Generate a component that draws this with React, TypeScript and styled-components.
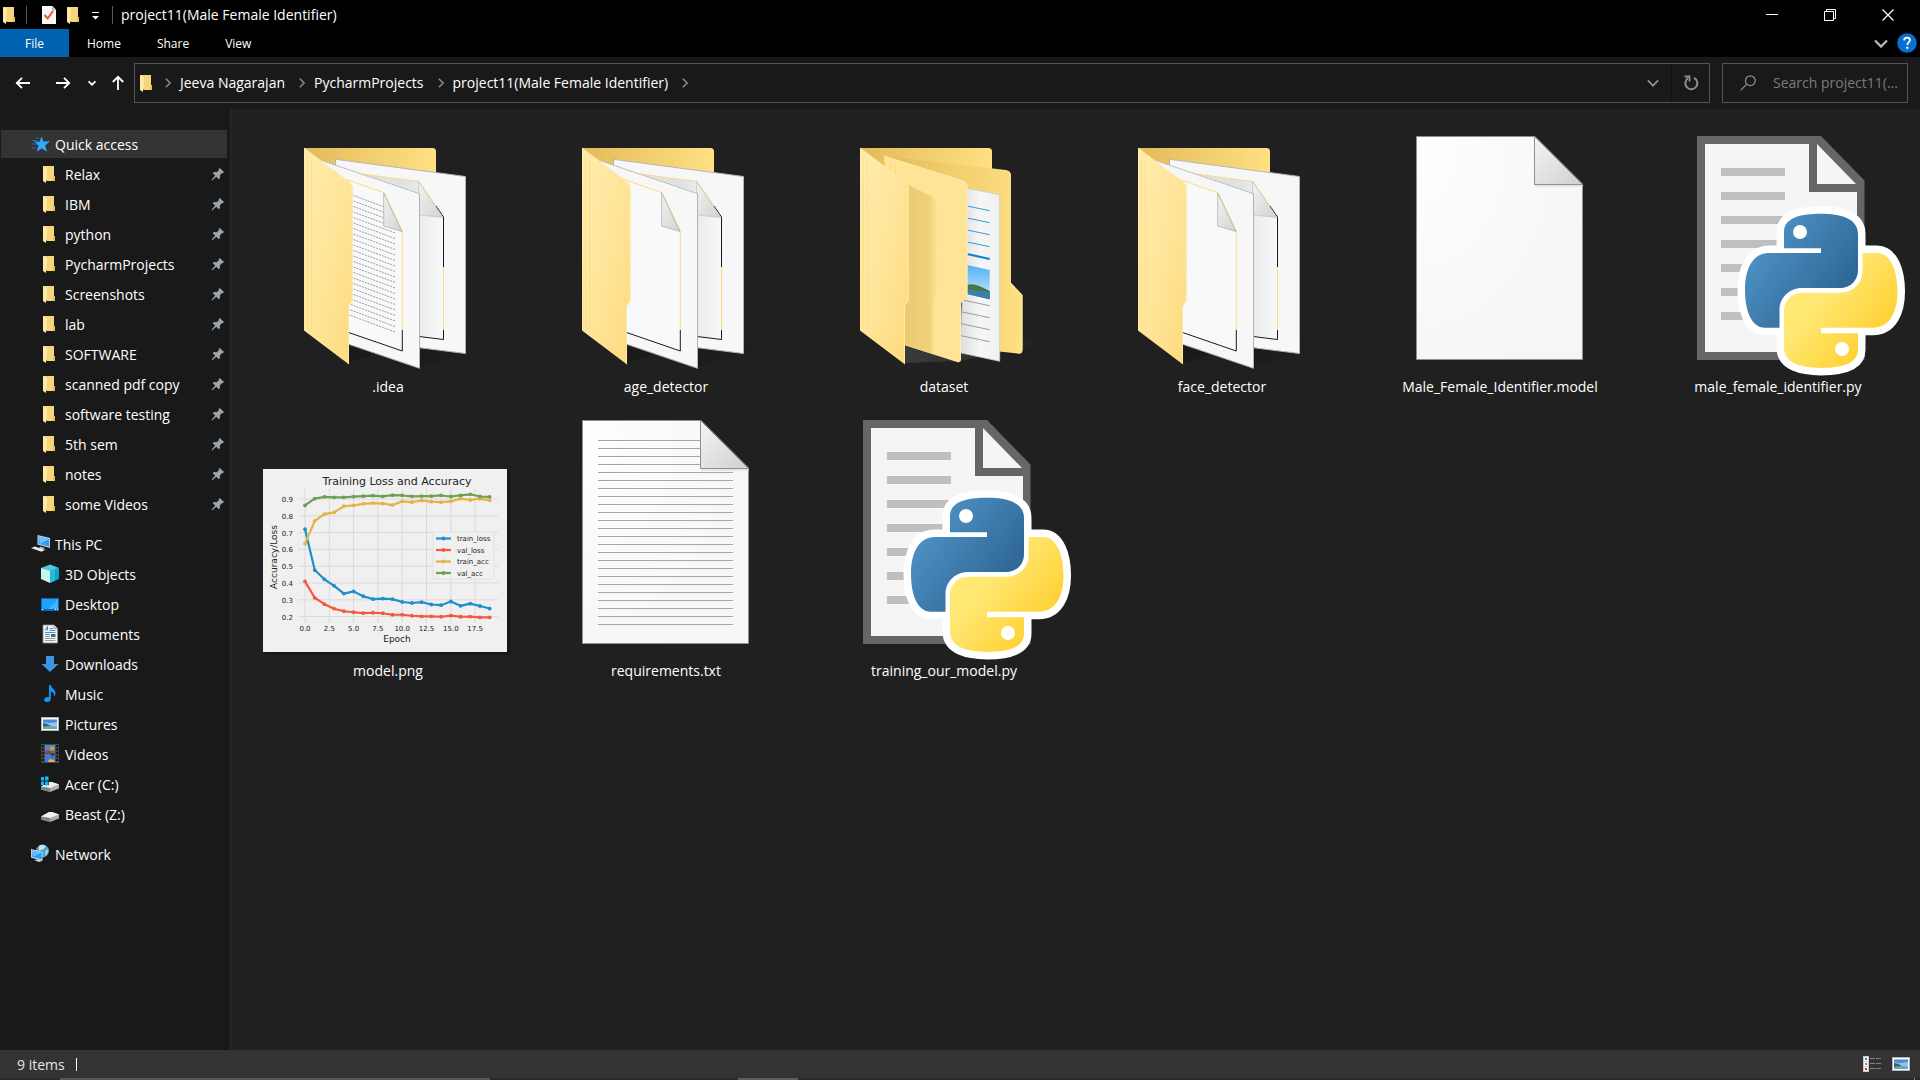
import React from "react";
import styled, { createGlobalStyle } from "styled-components";

const GlobalStyle = createGlobalStyle`
  *, *::before, *::after { box-sizing: border-box; }
  body {
    margin: 0;
    background: #202020;
    color: #fff;
    font-family: "Open Sans", "Noto Sans", sans-serif;
    font-size: 14px;
    line-height: 20px;
  }
  button, input {
    font: inherit;
    color: inherit;
    margin: 0;
    padding: 0;
    border: 0;
    background: transparent;
  }
  ul, ol { list-style: none; margin: 0; padding: 0; }
  a { color: inherit; text-decoration: none; }
  svg { display: block; flex: none; }
`;

const Window = styled.div`
  display: flex;
  flex-direction: column;
  min-height: 100vh;
`;

const TitleBar = styled.header`
  display: flex;
  align-items: center;
  height: 29px;
  padding: 0 3px;
  background: #000;
`;

const QuickTools = styled.div`
  display: flex;
  align-items: center;
  height: 29px;
  gap: 11px;
`;

const Rule = styled.span<{ $tint: string; $size: number; $after?: number }>`
  width: 1px;
  height: ${(p) => p.$size}px;
  margin-right: ${(p) => p.$after ?? 0}px;
  background: ${(p) => p.$tint};
`;

const ToolButton = styled.button<{ $after?: number }>`
  display: flex;
  align-items: center;
  justify-content: center;
  margin-right: ${(p) => p.$after ?? 0}px;
`;

const WindowTitle = styled.h1`
  flex: 1;
  margin: 0 0 0 8px;
  font-size: 14px;
  font-weight: 400;
`;

const WindowButton = styled.button`
  display: flex;
  align-items: center;
  justify-content: center;
  width: 58px;
  height: 29px;
`;

const Ribbon = styled.nav`
  display: flex;
  align-items: center;
  height: 28px;
  padding-right: 3px;
  background: #000;
  font-size: 12px;
`;

const RibbonTab = styled.button<{ $primary?: boolean }>`
  height: 28px;
  padding: 2px ${(p) => (p.$primary ? 25 : 18)}px 0;
  background: ${(p) => (p.$primary ? "#0063b1" : "transparent")};
`;

const Spacer = styled.div`
  flex: 1;
`;

const RibbonEnd = styled.div`
  display: flex;
  align-items: center;
  gap: 9px;
`;

const NavBar = styled.div`
  display: flex;
  align-items: center;
  height: 52px;
  padding: 0 12px 0 15px;
  background: #191919;
`;

const NavButtons = styled.div`
  display: flex;
  align-items: center;
  margin-right: 8px;
`;

const AddressBar = styled.div`
  display: flex;
  flex: 1;
  align-items: center;
  height: 40px;
  padding-left: 5px;
  border: 1px solid #535353;
`;

const Crumbs = styled.ol`
  display: flex;
  flex: 1;
  align-items: center;
  margin-left: 13px;
`;

const Crumb = styled.li`
  display: flex;
  align-items: center;
  gap: 9px;
  margin-right: 14px;
`;

const AddressButton = styled.button<{ $divided?: boolean }>`
  display: flex;
  align-items: center;
  justify-content: center;
  width: 38px;
  height: 38px;
  border-left: 1px solid ${(p) => (p.$divided ? "#111" : "transparent")};
`;

const SearchBox = styled.label`
  display: flex;
  align-items: center;
  gap: 17px;
  width: 186px;
  height: 40px;
  margin-left: 12px;
  padding: 0 4px 0 17px;
  border: 1px solid #535353;
`;

const SearchInput = styled.input`
  flex: 1;
  min-width: 0;
  outline: none;
  &::placeholder { color: #7c7c7c; opacity: 1; }
`;

const Body = styled.div`
  display: flex;
  flex: 1;
`;

const Sidebar = styled.nav`
  display: flex;
  flex-direction: column;
  gap: 12px;
  width: 231px;
  padding: 21px 3px 0 1px;
  border-right: 1px solid #2b2b2b;
  background: #191919;
`;

const TreeList = styled.ul`
  display: flex;
  flex-direction: column;
  gap: 2px;
`;

const TreeLink = styled.a<{ $child?: boolean; $active?: boolean }>`
  display: flex;
  align-items: center;
  gap: 4px;
  height: 28px;
  padding: 0 2px 0 ${(p) => (p.$child ? 40 : 30)}px;
  background: ${(p) => (p.$active ? "#333" : "transparent")};
`;

const TreeLabel = styled.span`
  flex: 1;
  padding-top: 2px;
  white-space: nowrap;
`;

const FileGrid = styled.main`
  display: grid;
  flex: 1;
  grid-template-columns: repeat(auto-fill, 278px);
  align-content: start;
  gap: 7px 0;
  padding: 11px 0 0 18px;
`;

const FileItem = styled.button`
  display: flex;
  flex-direction: column;
  align-items: center;
  gap: 1px;
`;

const StatusBar = styled.footer`
  display: flex;
  align-items: center;
  gap: 11px;
  height: 28px;
  padding: 0 8px 0 17px;
  background: #333;
  color: #e6e6e6;
`;

const ItemCount = styled.span`
  padding-top: 2px;
`;

const TaskStrip = styled.div`
  display: flex;
  height: 2px;
  padding: 0 5px 0 60px;
  background: #2b2829;
`;

const StripPart = styled.span<{ $width: number; $gap: number; $tint: string }>`
  width: ${(p) => p.$width}px;
  margin-right: ${(p) => p.$gap}px;
  background: ${(p) => p.$tint};
`;

/* ---------- small icons ---------- */

const SmallFolder = () => (
  <svg width="20" height="20" viewBox="0 0 20 20">
    <path d="M2 2h11v10l1 1v4H6L2 15z" fill="#f6d67a" />
    <path d="M12 12h2v5h-2z" fill="#e9c05a" />
    <path d="M2 2l4 2.2v9.3l-1 1V19l-3-2z" fill="#ffe9a8" />
  </svg>
);

const BarFolder = () => (
  <svg width="12" height="18" viewBox="2 1 12 18">
    <path d="M2 2h11v10l1 1v4H6L2 15z" fill="#f6d67a" />
    <path d="M12 12h2v5h-2z" fill="#e9c05a" />
    <path d="M2 2l4 2.2v9.3l-1 1V19l-3-2z" fill="#ffe9a8" />
  </svg>
);

const CheckedPage = () => (
  <svg width="14" height="18" viewBox="0 0 14 18">
    <path d="M0 0h10.500l3.500 4v14H0z" fill="#f7f7f7" />
    <path d="M10.500 0v4H14" fill="#ccc" stroke="#999" strokeWidth=".6" />
    <path d="M2.500 9l3.200 3.500L11 5" fill="none" stroke="#e8571f" strokeWidth="2" />
  </svg>
);

const Chevron = ({ dir, size, tint, weight = 2 }: { dir: "down" | "right"; size: number; tint: string; weight?: number }) => (
  <svg width={dir === "down" ? size : size / 2 + 1} height={dir === "down" ? size / 2 + 2 : size} viewBox={dir === "down" ? "0 0 14 9" : "0 0 8 14"}>
    <path d={dir === "down" ? "M1 1.500l6 6 6-6" : "M1 1l6 6-6 6"} fill="none" stroke={tint} strokeWidth={weight} />
  </svg>
);

const Arrow = ({ turn = 0 }: { turn?: number }) => (
  <svg width="16" height="16" viewBox="0 0 16 16">
    <path d="M15 8H2M7 2.800L1.800 8 7 13.200" fill="none" stroke="#fff" strokeWidth="1.800" transform={`rotate(${turn} 8 8)`} />
  </svg>
);

const Pin = () => (
  <svg width="14" height="14" viewBox="0 0 14 14">
    <path d="M8.800 1l4.200 4-1.200 1.200-.7-.2-2.300 2.400.2 2.700-1.200 1.100L5.300 9.700 1.400 13.200l-.8.100.2-.9L4.200 8.600 1.700 6.200l1.200-1.100 2.800.2 2.300-2.400-.3-.8z" fill="#9aa5ad" />
  </svg>
);

const Star = () => (
  <svg width="20" height="20" viewBox="0 0 20 20">
    <path d="M10.500 2.500l2 4.900 6.500-.2-4.800 4.300 1.800 6.200-5.200-3.300-5 3 1.600-5.700L3.500 7.600l5 .2z" fill="#2fa9f5" />
    <path d="M1 6.500h5M0 10h6M1 14h4M5 4h3" stroke="#1a6fae" strokeWidth="1" />
  </svg>
);

const ThisPc = () => (
  <svg width="20" height="20" viewBox="0 0 20 20">
    <path d="M6.500 1l12.500 3v10L6.500 10.500z" fill="#cfd6dc" />
    <path d="M7.500 2.300l10.700 2.600v7.800L7.500 9.700z" fill="#2f9df0" />
    <path d="M7.500 2.300l10.700 2.600L9 10z" fill="#6cc0fb" />
    <path d="M9 12.500l5 1.500-2 1.500 4 .5-5 .5-3-2z" fill="#b7bdc2" />
    <path d="M0 14l4-1.500 9.500 3.500-3 1.800z" fill="#e8eaec" />
  </svg>
);

const Cube = () => (
  <svg width="20" height="20" viewBox="0 0 20 20">
    <path d="M0 4l9-3.500L18 4l-9 4z" fill="#52c9d8" />
    <path d="M0 4l9 3v12l-9-4z" fill="#c8f3f3" />
    <path d="M18 4L9 7v12l9-4z" fill="#0aa5cf" />
    <path d="M9 7l5-1.500v11L9 19z" fill="#25bcd9" />
  </svg>
);

const DesktopIcon = () => (
  <svg width="20" height="20" viewBox="0 0 20 20">
    <rect x="0" y="4" width="18" height="13" fill="#0a6cb8" />
    <rect x="1" y="5" width="16" height="10" fill="#1ba1fb" />
    <path d="M17 5v10H7z" fill="#45b4ff" />
    <path d="M1 15.500h1M14 15.500h1M16 15.500h1" stroke="#fff" />
  </svg>
);

const DocumentIcon = () => (
  <svg width="20" height="20" viewBox="0 0 20 20">
    <path d="M2 1h11l3.500 3.500V19H2z" fill="#f4f4f4" stroke="#8e8e8e" strokeWidth=".8" />
    <path d="M13 1v3.500h3.500" fill="#ddd" stroke="#8e8e8e" strokeWidth=".8" />
    <path d="M4 6.500L6.500 2.500V6.500" fill="none" stroke="#2b86c8" />
    <path d="M8.500 4.500H12M8.500 6.500h6M4 8.500h10.500M4 10.500h5" stroke="#3d94d3" />
    <path d="M4 12.500h5M4 14.500h10.500M4 16.500h10.500" stroke="#9a9a9a" />
    <rect x="10" y="10" width="4.500" height="3" fill="#36708c" />
  </svg>
);

const DownloadIcon = () => (
  <svg width="20" height="20" viewBox="0 0 20 20">
    <path d="M5 2h8v8h4.500L9 18 .5 10H5z" fill="#3b94e6" />
  </svg>
);

const MusicIcon = () => (
  <svg width="20" height="20" viewBox="0 0 20 20">
    <path d="M8 1h1.800c.3 3.500 4.700 4.300 4.700 8 0 1.800-.8 2.800-1.700 3.600.8-2.800-.7-4.600-3-5v7.200C9.800 17 8 18 6 18c-1.700 0-2.800-.8-2.800-2.200 0-1.800 2-3 4.800-2.600z" fill="#0f9bf5" />
  </svg>
);

const PictureIcon = () => (
  <svg width="20" height="20" viewBox="0 0 20 20">
    <rect x="0" y="3" width="18" height="14" fill="#b4b4b4" />
    <rect x="1" y="4" width="16" height="12" fill="#fff" />
    <rect x="2" y="5" width="14" height="10" fill="#8fc5ee" />
    <path d="M2 6h14v2l-8 1-6-1z" fill="#4b88d6" />
    <path d="M2 9q4 0 7 2.500t7 1.500v2H2z" fill="#37694f" />
    <path d="M2 13q7-2 14 0v2H2z" fill="#6ba6b8" />
  </svg>
);

const VideoIcon = () => (
  <svg width="20" height="20" viewBox="0 0 20 20">
    <rect x="0" y="0" width="18" height="19" fill="#484848" />
    <path d="M1.800 1v17M16.200 1v17" stroke="#111" strokeWidth="2" strokeDasharray="2 1.500" />
    <rect x="4" y="1" width="10" height="8" fill="#4a86e0" />
    <rect x="4" y="10" width="10" height="8" fill="#3f7bdc" />
    <path d="M4 7l3-1 2 1 3-.5V9H4z" fill="#b33a2c" />
    <circle cx="11" cy="4.500" r="2.200" fill="#c9a42a" />
    <path d="M10 7h4v2h-4z" fill="#3e8a3c" />
    <path d="M7 17l2-2 3 1 2 1v1H7z" fill="#e0b93a" />
    <path d="M9 10h5l-2 2.500z" fill="#1d3c74" />
    <path d="M10.500 12h1.500v1.500h-1.500z" fill="#c0392b" />
  </svg>
);

const DriveIcon = ({ system }: { system?: boolean }) => (
  <svg width="20" height="20" viewBox="0 0 20 20">
    <path d="M0 12.500L8 8h3l7 2.500v4L9 18l-9-2.500z" fill="#a9adb1" />
    <path d="M0 12.500L8 8h3l7 2.500-9 3.500z" fill="#eceef0" />
    <path d="M0 12.500l9 1.800V18l-9-2.500z" fill="#7c8083" />
    <path d="M2 15h2" stroke="#36c65b" />
    {system && (
      <g>
        <rect x="0" y="2" width="8" height="9" fill="#191919" />
        <path d="M0 3h3v3.500H0zM4 2.500h3.500v4H4zM0 7.500h3V11H0zM4 7.500h3.500v4H4z" fill="#0fb9f3" />
      </g>
    )}
  </svg>
);

const NetworkIcon = () => (
  <svg width="20" height="20" viewBox="0 0 20 20">
    <circle cx="11.500" cy="7" r="6.500" fill="#4fa3c8" />
    <path d="M8 2q4-2.500 7 .5l-3 3-4 1z" fill="#c4e6ef" />
    <path d="M14 7l3-2v4l-3 3z" fill="#9ad0e2" />
    <path d="M0 5l11.500 3v9L0 13.500z" fill="#d4e4ef" />
    <path d="M.8 6.200l10 2.600v6.800L.8 12.800z" fill="#2b9df2" />
    <path d="M.8 6.200l10 2.600-9 4z" fill="#67bdfa" />
    <path d="M3 16l4-.5 4 1.500-3 1z" fill="#d8dcdf" />
  </svg>
);

/* ---------- large icons ---------- */

const FLAP = "M44 28L90 62.500Q92.700 64.500 92.700 68V180L89 186.500V244.500L44 210.500Z";

const FrontFlap = ({ id }: { id: string }) => (
  <>
    <linearGradient id={`${id}-flap`} x1="0" y1="0" x2="1" y2="1">
      <stop offset="0" stopColor="#ffecad" />
      <stop offset=".5" stopColor="#ffe59a" />
      <stop offset="1" stopColor="#fdd97b" />
    </linearGradient>
    <path d={FLAP} fill={`url(#${id}-flap)`} />
    <path d="M47.500 37V209M51.500 40V210" stroke="#fddf85" />
    <path d="M44 28L90 62.500Q92.200 64.500 92.200 68V180L88.500 186.500V244" fill="none" stroke="#ffeeb8" strokeWidth=".8" />
  </>
);

const BackPanel = ({ id }: { id: string }) => (
  <>
    <linearGradient id={`${id}-back`}>
      <stop offset="0" stopColor="#e3bb58" />
      <stop offset="1" stopColor="#ffe083" />
    </linearGradient>
    <path d="M44 28H172.500Q176 28 176 31.500V90H90Z" fill={`url(#${id}-back)`} />
  </>
);

const FloorShadow = ({ id }: { id: string }) => (
  <>
    <linearGradient id={`${id}-floor`}>
      <stop offset="0" stopColor="#000" stopOpacity=".3" />
      <stop offset="1" stopColor="#000" stopOpacity="0" />
    </linearGradient>
    <path d="M89 226L200 218L228 224L160 247Z" fill={`url(#${id}-floor)`} />
    <path d="M89 228L116 234L89 243Z" fill="#1a1a1a" />
  </>
);

const PaperFolder = ({ id, lined }: { id: string; lined?: boolean }) => (
  <svg width="256" height="256" viewBox="0 0 256 256">
    <defs>
      <linearGradient id={`${id}-curl`} x1="0" y1="0" x2="1" y2="1">
        <stop offset="0" stopColor="#f3f3f3" />
        <stop offset="1" stopColor="#d2d2d2" />
      </linearGradient>
      <linearGradient id={`${id}-inner`}>
        <stop offset=".5" stopColor="#dfe2e4" />
        <stop offset="1" stopColor="#f7f9fa" />
      </linearGradient>
      <clipPath id={`${id}-page`}>
        <path d="M80 57L124 72.700L136 98V231L80 212Z" />
      </clipPath>
    </defs>
    <FloorShadow id={id} />
    <BackPanel id={id} />
    <path d="M75.500 39L205.500 56.500V233.500L159 227.500V73L75.500 45Z" fill="#f7f7f8" />
    <path d="M75.500 45V39.300L205.500 56.500V233.500L159 227.700" fill="none" stroke="#b4b4b4" />
    <path d="M102 54L159 61.500L183.500 97V219.500L159 216.500V73Z" fill={`url(#${id}-inner)`} />
    <path d="M102 54L159 61.500L176 86M183.500 147V210" fill="none" stroke="#fbdc7e" />
    <path d="M176 86L183.500 97V147M183.500 210V219.500L159 216.500" fill="none" stroke="#1a1a1a" />
    <path d="M158.500 61.500L183 97.500L159 95Z" fill={`url(#${id}-curl)`} stroke="#bbb" strokeWidth=".6" />
    <path d="M58 39L159.500 73.700V248.300L88 224Z" fill="#f7f7f8" />
    <path d="M58 39.300L159.500 73.700" fill="none" stroke="#aaa" strokeDasharray="2 1" />
    <path d="M159.500 73.700V248.300L88 224" fill="none" stroke="#b4b4b4" />
    <path d="M80 57.300L124 72.700L142.300 111V231L88 212.500Z" fill="#f7f9fb" />
    {lined && (
      <g clipPath={`url(#${id}-page)`} stroke="#9c9c9c" strokeDasharray="2 1">
        {Array.from({ length: 23 }, (_, i) => (
          <line key={i} x1="88" y1={73.5 + i * 5.5} x2="136" y2={91.3 + i * 5.5} />
        ))}
      </g>
    )}
    <path d="M80 57.300L124 72.700L142.300 111V210" fill="none" stroke="#fbdc7e" />
    <path d="M142.300 210V231L88 212.300" fill="none" stroke="#1a1a1a" />
    <path d="M123.700 73L142 111.500L123.700 106Z" fill={`url(#${id}-curl)`} stroke="#aaa" strokeWidth=".7" />
    <FrontFlap id={id} />
  </svg>
);

const NestedFolder = ({ id }: { id: string }) => (
  <svg width="256" height="256" viewBox="0 0 256 256">
    <defs>
      <linearGradient id={`${id}-shade`}>
        <stop offset="0" stopColor="#e4c263" stopOpacity=".8" />
        <stop offset=".8" stopColor="#e4c263" stopOpacity=".55" />
        <stop offset="1" stopColor="#e4c263" stopOpacity="0" />
      </linearGradient>
      <linearGradient id={`${id}-sheet`}>
        <stop offset="0" stopColor="#dcdcdc" />
        <stop offset=".5" stopColor="#f6f6f6" />
        <stop offset="1" stopColor="#f0f0f0" />
      </linearGradient>
      <linearGradient id={`${id}-sky`} x1="0" y1="0" x2="0" y2="1">
        <stop offset="0" stopColor="#4fb0f6" />
        <stop offset="1" stopColor="#cfe9fb" />
      </linearGradient>
      <linearGradient id={`${id}-floor`}>
        <stop offset="0" stopColor="#3a3a3a" />
        <stop offset=".7" stopColor="#2b2b2b" />
        <stop offset="1" stopColor="#202020" />
      </linearGradient>
    </defs>
    <path d="M89 226L200 218L226 224L145 241L89 243Z" fill={`url(#${id}-floor)`} />
    <BackPanel id={id} />
    <path d="M68 36L190 50Q195 51 195 55V162.700L206.500 175V230Q206.500 234 203 233.700L150 228V80Z" fill={`url(#${id}-back)`} />
    <path d="M194.500 163L206 175.200V230" fill="none" stroke="#ffeeb4" strokeWidth=".8" />
    <path d="M151 68.300L183.700 74.700V241.300L144 232.700Z" fill={`url(#${id}-sheet)`} stroke="#c9c9c9" strokeWidth=".8" />
    {[86, 98, 110, 122].map((y) => (
      <line key={y} x1="151" y1={y} x2="173.700" y2={y + 4.7} stroke="#2e9bdc" />
    ))}
    <line x1="151" y1="134" x2="173.700" y2="139" stroke="#0a84d0" strokeWidth="2.200" />
    <path d="M151 145L173.700 150V179.300L151 174Z" fill={`url(#${id}-sky)`} />
    <path d="M151 165Q156 163 163 166Q168 168 173.700 171V179.300L151 174Z" fill="#4c7440" />
    <path d="M151 169L173.700 172V179.300L151 174Z" fill="#3a80ad" />
    {[181, 193, 205, 217].map((y) => (
      <line key={y} x1="144" y1={y - 1.5} x2="173.700" y2={y + 4.7} stroke="#9d9d9d" />
    ))}
    <path d="M68 36L147.500 61Q151.500 62.500 151.500 67V176.700L145 183V239Q145 243 141 242L80 222.500Z" fill="#ffe396" />
    <path d="M68 36L147.500 61Q151 62.500 151 67V176.700L144.500 183V240" fill="none" stroke="#ffefb9" strokeWidth=".8" />
    <path d="M74.500 44V80M79.500 46V80" stroke="#fbdb7c" />
    <path d="M80 58L118 78Q121 80 121 84V172L117 182V234L84 223Z" fill={`url(#${id}-shade)`} />
    <FrontFlap id={id} />
  </svg>
);

const PlainDoc = ({ id, lined }: { id: string; lined?: boolean }) => (
  <svg width="256" height="256" viewBox="0 0 256 256">
    <defs>
      <radialGradient id={`${id}-sheet`} cx=".05" cy=".1" r="1">
        <stop offset="0" stopColor="#fdfefe" />
        <stop offset="1" stopColor="#f4f6f8" />
      </radialGradient>
      <linearGradient id={`${id}-curl`} x1="0" y1="0" x2="1" y2="1">
        <stop offset="0" stopColor="#f4f4f4" />
        <stop offset="1" stopColor="#d0d0d0" />
      </linearGradient>
    </defs>
    <path d="M44.500 16.500H163L210.500 64V239.500H44.500Z" fill={`url(#${id}-sheet)`} stroke="#8f8f8f" />
    {lined &&
      Array.from({ length: 24 }, (_, i) => (
        <line key={i} x1="60" x2={i < 4 ? 163 : 195} y1={36.5 + i * 8} y2={36.5 + i * 8} stroke="#a6a6a6" />
      ))}
    <path d="M163 66H210.500" stroke="#e4e6e7" strokeWidth="2" />
    <path d="M162.500 16.500V64.500H210.500Z" fill={`url(#${id}-curl)`} stroke="#8f8f8f" />
  </svg>
);

const SNAKE =
  "M134 128.300V112C134 97 152 93.700 171 93.700C190 93.700 208 98 208 114V150C208 160 201 168 190 168H152C139 168 129.500 178 129.500 190V207.700H115C101 207.700 95 190 95 170C95 150 102 133 119 133H171V128.300Z";

const GOLD_SNAKE =
  "M208 213.300V229.600C208 244.600 190 247.900 171 247.900C152 247.900 134 243.600 134 227.600V191.600C134 181.600 141 172.800 152 172.800H190C203 172.800 212.500 163.600 212.500 151.600V133H227C241 133 247.500 151.600 247.500 171.600C247.500 191.600 240 207.700 223 207.700H171V213.300Z";

const PythonDoc = ({ id }: { id: string }) => (
  <svg width="256" height="256" viewBox="0 0 256 256">
    <defs>
      <linearGradient id={`${id}-blue`} x1=".1" y1=".1" x2=".85" y2=".65">
        <stop offset="0" stopColor="#5296c9" />
        <stop offset="1" stopColor="#306998" />
      </linearGradient>
      <linearGradient id={`${id}-gold`} x1=".9" y1=".8" x2=".3" y2=".3">
        <stop offset=".1" stopColor="#ffd031" />
        <stop offset=".9" stopColor="#ffe873" />
      </linearGradient>
    </defs>
    <path d="M47 16H171L214.500 60.500V240H47Z" fill="#666" />
    <path d="M55 24H159V72H207V232H55Z" fill="#f5f5f5" />
    <path d="M167 24V64H206Z" fill="#f5f5f5" />
    {Array.from({ length: 7 }, (_, i) => (
      <rect key={i} x="71" y={48 + i * 24} width="64" height="8" fill="#bfbfbf" />
    ))}
    <g fill="#fff" stroke="#fff" strokeWidth="15" strokeLinejoin="round">
      <path d={SNAKE} />
      <path d={GOLD_SNAKE} />
    </g>
    <path d={SNAKE} fill={`url(#${id}-blue)`} />
    <path d={GOLD_SNAKE} fill={`url(#${id}-gold)`} />
    <circle cx="150" cy="112" r="7" fill="#fff" />
    <circle cx="192" cy="229" r="7" fill="#fff" />
  </svg>
);

const px = (epoch: number) => 45 + epoch * 9.72;
const py = (value: number) => 95 + (0.9 - value) * 168;

const SERIES = [
  { name: "train_loss", tint: "#1f8fc9", values: [0.72, 0.477, 0.422, 0.383, 0.337, 0.35, 0.321, 0.304, 0.307, 0.304, 0.287, 0.281, 0.286, 0.272, 0.268, 0.29, 0.264, 0.277, 0.263, 0.248] },
  { name: "val_loss", tint: "#f4583f", values: [0.41, 0.312, 0.274, 0.247, 0.232, 0.226, 0.221, 0.223, 0.22, 0.211, 0.211, 0.205, 0.201, 0.201, 0.199, 0.206, 0.199, 0.2, 0.195, 0.195] },
  { name: "train_acc", tint: "#e3b348", values: [0.633, 0.77, 0.81, 0.82, 0.857, 0.862, 0.871, 0.876, 0.873, 0.864, 0.886, 0.881, 0.891, 0.884, 0.881, 0.886, 0.902, 0.894, 0.902, 0.892] },
  { name: "val_acc", tint: "#6f9f52", values: [0.862, 0.902, 0.913, 0.91, 0.91, 0.914, 0.917, 0.92, 0.916, 0.923, 0.921, 0.916, 0.917, 0.917, 0.921, 0.915, 0.922, 0.928, 0.915, 0.913] },
];

const ChartText = styled.text`
  font-family: "DejaVu Sans", sans-serif;
  fill: #222;
`;

const ChartThumb = () => (
  <svg width="256" height="256" viewBox="0 0 256 256">
    <rect x="5" y="67" width="245" height="184" fill="#181818" />
    <rect x="3" y="65" width="244" height="183" fill="#f0f0f0" />
    <g stroke="#dadada">
      {[0, 2.5, 5, 7.5, 10, 12.5, 15, 17.5].map((t) => (
        <line key={t} x1={px(t)} x2={px(t)} y1="85" y2="219" />
      ))}
      {[0.2, 0.3, 0.4, 0.5, 0.6, 0.7, 0.8, 0.9].map((t) => (
        <line key={t} x1="38" x2="238" y1={py(t)} y2={py(t)} />
      ))}
    </g>
    {SERIES.map((s) => (
      <g key={s.name} stroke={s.tint} fill={s.tint}>
        <polyline points={s.values.map((v, i) => `${px(i)},${py(v)}`).join(" ")} fill="none" strokeWidth="2.200" strokeLinejoin="round" />
        {s.values.map((v, i) => (
          <circle key={i} cx={px(i)} cy={py(v)} r="1.900" stroke="none" />
        ))}
      </g>
    ))}
    <rect x="173" y="128" width="61" height="47" rx="1" fill="#f0f0f0" stroke="#e2e2e2" />
    {SERIES.map((s, i) => (
      <g key={s.name}>
        <line x1="176" x2="191" y1={134.5 + i * 11.5} y2={134.5 + i * 11.5} stroke={s.tint} strokeWidth="2.200" />
        <circle cx="183.500" cy={134.5 + i * 11.5} r="1.900" fill={s.tint} />
        <ChartText x="197" y={137 + i * 11.5} fontSize="7">{s.name}</ChartText>
      </g>
    ))}
    {[0, 2.5, 5, 7.5, 10, 12.5, 15, 17.5].map((t) => (
      <ChartText key={t} x={px(t)} y="227" fontSize="7" textAnchor="middle">{t.toFixed(1)}</ChartText>
    ))}
    {[0.2, 0.3, 0.4, 0.5, 0.6, 0.7, 0.8, 0.9].map((t) => (
      <ChartText key={t} x="33" y={py(t) + 3} fontSize="7" textAnchor="end">{t.toFixed(1)}</ChartText>
    ))}
    <ChartText x="137" y="81" fontSize="11" textAnchor="middle">Training Loss and Accuracy</ChartText>
    <ChartText x="137" y="238" fontSize="9" textAnchor="middle">Epoch</ChartText>
    <ChartText fontSize="9" textAnchor="middle" transform="translate(17 153) rotate(-90)">Accuracy/Loss</ChartText>
  </svg>
);

/* ---------- data ---------- */

const PINNED = ["Relax", "IBM", "python", "PycharmProjects", "Screenshots", "lab", "SOFTWARE", "scanned pdf copy", "software testing", "5th sem", "notes", "some Videos"];

const PLACES = [
  { name: "3D Objects", icon: <Cube /> },
  { name: "Desktop", icon: <DesktopIcon /> },
  { name: "Documents", icon: <DocumentIcon /> },
  { name: "Downloads", icon: <DownloadIcon /> },
  { name: "Music", icon: <MusicIcon /> },
  { name: "Pictures", icon: <PictureIcon /> },
  { name: "Videos", icon: <VideoIcon /> },
  { name: "Acer (C:)", icon: <DriveIcon system /> },
  { name: "Beast (Z:)", icon: <DriveIcon /> },
];

const CRUMBS = ["Jeeva Nagarajan", "PycharmProjects", "project11(Male Female Identifier)"];

const FILES = [
  { name: ".idea", icon: <PaperFolder id="idea" lined /> },
  { name: "age_detector", icon: <PaperFolder id="age" /> },
  { name: "dataset", icon: <NestedFolder id="data" /> },
  { name: "face_detector", icon: <PaperFolder id="face" /> },
  { name: "Male_Female_Identifier.model", icon: <PlainDoc id="model" /> },
  { name: "male_female_identifier.py", icon: <PythonDoc id="mfi" /> },
  { name: "model.png", icon: <ChartThumb /> },
  { name: "requirements.txt", icon: <PlainDoc id="req" lined /> },
  { name: "training_our_model.py", icon: <PythonDoc id="train" /> },
];

const TreeRow = ({ name, icon, child, active, pinned }: { name: string; icon: React.ReactNode; child?: boolean; active?: boolean; pinned?: boolean }) => (
  <li>
    <TreeLink href="#" $child={child} $active={active}>
      {icon}
      <TreeLabel>{name}</TreeLabel>
      {pinned && <Pin />}
    </TreeLink>
  </li>
);

const CrumbChevron = () => <Chevron dir="right" size={10} tint="#8a8a8a" weight={2.2} />;

export default function App() {
  return (
    <>
      <GlobalStyle />
      <Window>
        <TitleBar>
          <QuickTools>
            <BarFolder />
            <Rule $tint="#5a5a5a" $size={18} $after={4} />
            <ToolButton aria-label="Properties">
              <CheckedPage />
            </ToolButton>
            <ToolButton aria-label="New folder">
              <BarFolder />
            </ToolButton>
            <ToolButton aria-label="Customize toolbar">
              <svg width="11" height="10" viewBox="0 0 11 10">
                <path d="M2 2.500h7" stroke="#fff" />
                <path d="M2 6h7L5.500 9.500z" fill="#fff" />
              </svg>
            </ToolButton>
            <Rule $tint="#5a5a5a" $size={18} />
          </QuickTools>
          <WindowTitle>project11(Male Female Identifier)</WindowTitle>
          <WindowButton aria-label="Minimize">
            <svg width="12" height="12"><path d="M0 5.500h12" stroke="#fff" /></svg>
          </WindowButton>
          <WindowButton aria-label="Restore">
            <svg width="12" height="12"><path d="M.5 2.500h9v9h-9zM2.500 2.500v-2h9v9h-2" fill="none" stroke="#fff" /></svg>
          </WindowButton>
          <WindowButton aria-label="Close">
            <svg width="12" height="12"><path d="M.5.500l11 11M11.500.500l-11 11" stroke="#fff" strokeWidth="1.200" /></svg>
          </WindowButton>
        </TitleBar>

        <Ribbon aria-label="Ribbon">
          <RibbonTab $primary>File</RibbonTab>
          <RibbonTab>Home</RibbonTab>
          <RibbonTab>Share</RibbonTab>
          <RibbonTab>View</RibbonTab>
          <Spacer />
          <RibbonEnd>
            <ToolButton aria-label="Expand the ribbon">
              <Chevron dir="down" size={14} tint="#b5b5b5" weight={2.4} />
            </ToolButton>
            <ToolButton aria-label="Help">
              <svg width="20" height="20" viewBox="0 0 20 20">
                <circle cx="10" cy="10" r="9.800" fill="#0a6fd0" />
                <path d="M7 7.300C7.200 5.400 8.500 4.600 10 4.600c1.800 0 3 1 3 2.500 0 2.200-2.700 2.400-2.700 4.800" fill="none" stroke="#fff" strokeWidth="1.800" />
                <circle cx="10.300" cy="14.700" r="1.200" fill="#fff" />
              </svg>
            </ToolButton>
          </RibbonEnd>
        </Ribbon>

        <NavBar>
          <NavButtons>
            <ToolButton $after={24} aria-label="Back"><Arrow /></ToolButton>
            <ToolButton $after={17} aria-label="Forward"><Arrow turn={180} /></ToolButton>
            <ToolButton $after={14} aria-label="Recent locations"><Chevron dir="down" size={8} tint="#fff" weight={3} /></ToolButton>
            <ToolButton aria-label="Up"><Arrow turn={90} /></ToolButton>
          </NavButtons>
          <AddressBar>
            <BarFolder />
            <Crumbs>
              {CRUMBS.map((name) => (
                <Crumb key={name}>
                  <CrumbChevron />
                  <a href="#">{name}</a>
                </Crumb>
              ))}
              <Crumb><CrumbChevron /></Crumb>
            </Crumbs>
            <AddressButton aria-label="Previous locations"><Chevron dir="down" size={12} tint="#8f8f8f" weight={2.2} /></AddressButton>
            <AddressButton $divided aria-label="Refresh">
              <svg width="16" height="16" viewBox="0 0 16 16">
                <path d="M5 3.200A6 6 0 1 0 11 2.800" fill="none" stroke="#8f8f8f" strokeWidth="2" />
                <path d="M1.500 1.500H6.500V6.500" fill="none" stroke="#8f8f8f" strokeWidth="1.800" />
              </svg>
            </AddressButton>
          </AddressBar>
          <SearchBox>
            <svg width="16" height="16" viewBox="0 0 16 16">
              <circle cx="10.300" cy="5.700" r="4.900" fill="none" stroke="#8f8f8f" strokeWidth="1.200" />
              <path d="M6.800 9.200L.6 15.400" stroke="#8f8f8f" strokeWidth="1.200" />
            </svg>
            <SearchInput type="text" aria-label="Search" placeholder="Search project11(..." />
          </SearchBox>
        </NavBar>

        <Body>
          <Sidebar aria-label="Folders">
            <TreeList>
              <TreeRow name="Quick access" icon={<Star />} active />
              {PINNED.map((name) => (
                <TreeRow key={name} name={name} icon={<SmallFolder />} child pinned />
              ))}
            </TreeList>
            <TreeList>
              <TreeRow name="This PC" icon={<ThisPc />} />
              {PLACES.map((place) => (
                <TreeRow key={place.name} name={place.name} icon={place.icon} child />
              ))}
            </TreeList>
            <TreeList>
              <TreeRow name="Network" icon={<NetworkIcon />} />
            </TreeList>
          </Sidebar>
          <FileGrid>
            {FILES.map((file) => (
              <FileItem key={file.name}>
                {file.icon}
                <span>{file.name}</span>
              </FileItem>
            ))}
          </FileGrid>
        </Body>

        <StatusBar>
          <ItemCount>9 items</ItemCount>
          <Rule $tint="#fff" $size={13} />
          <Spacer />
          <ToolButton aria-label="Details view">
            <svg width="18" height="16" viewBox="0 0 18 16">
              <rect x="0" y="0" width="6" height="16" fill="#c9c9c9" />
              <path d="M1 1h4v4H1zM1 6h4v4H1zM1 11h4v4H1z" fill="#fff" />
              <path d="M2 3h2" stroke="#3579a8" strokeWidth="2" />
              <path d="M2 8h2" stroke="#b0713a" strokeWidth="2" />
              <path d="M2 13h2" stroke="#c8281c" strokeWidth="2" />
              <path d="M7 2.500h5M13 2.500h5M7 7.500h5M13 7.500h5M7 12.500h5M13 12.500h5" stroke="#858585" />
            </svg>
          </ToolButton>
          <ToolButton aria-label="Large icons view"><PictureIcon /></ToolButton>
        </StatusBar>
        <TaskStrip>
          <StripPart $width={430} $gap={248} $tint="#595657" />
          <StripPart $width={60} $gap={0} $tint="#5e5c5d" />
          <Spacer />
          <StripPart $width={1} $gap={0} $tint="#8a8a8a" />
        </TaskStrip>
      </Window>
    </>
  );
}
